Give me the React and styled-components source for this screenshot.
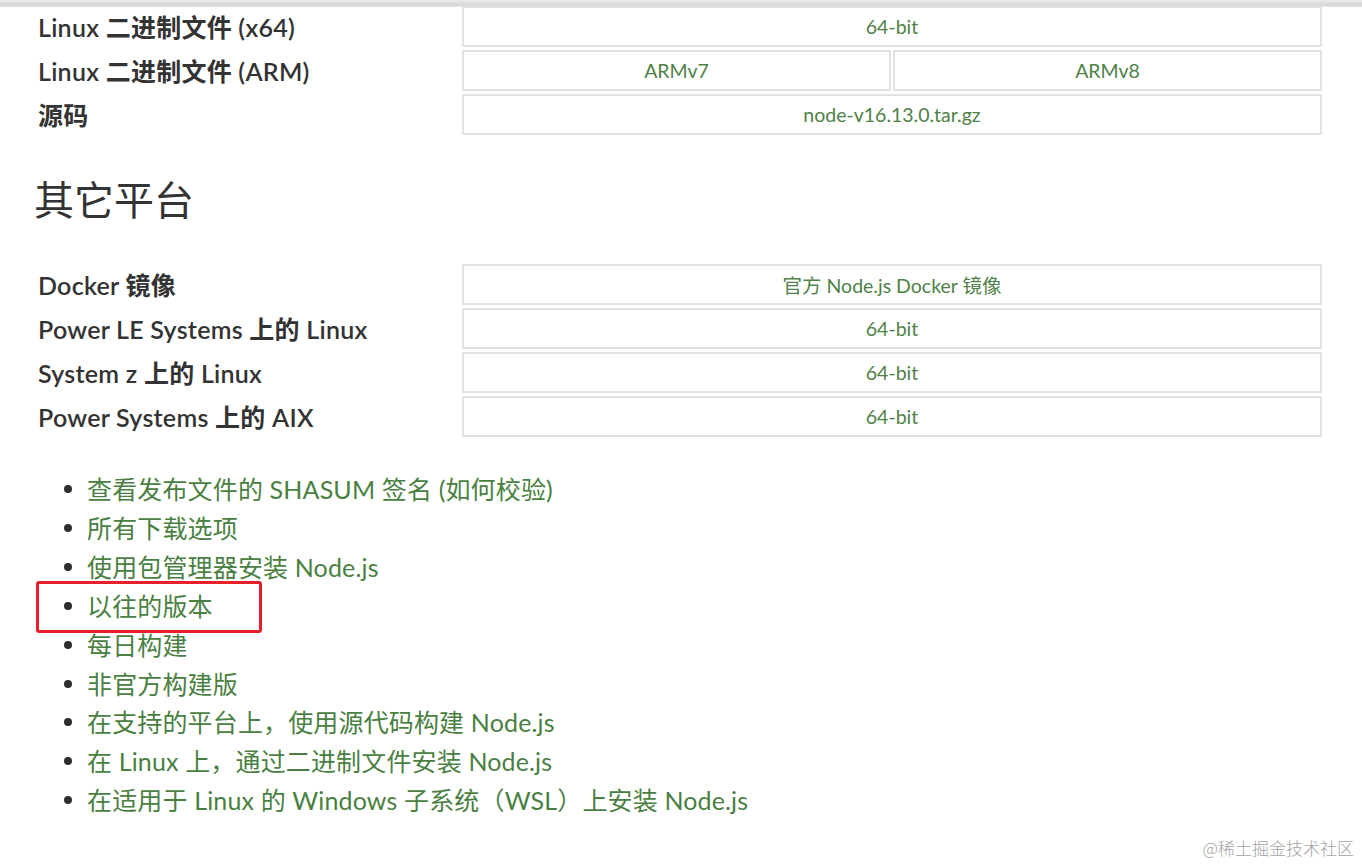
import React from "react";
import styled, { createGlobalStyle } from "styled-components";

const Global = createGlobalStyle`
  html, body { margin: 0; padding: 0; background: #fff; }
  body { font-family: Lato, "Noto Sans CJK SC", sans-serif; color: #333; }
`;

const Page = styled.div`
  position: relative;
  width: 1362px;
  min-height: 866px;
  box-sizing: border-box;
  padding: 6px 40px 0 37px;
  overflow: hidden;
`;

const TopShade = styled.div`
  position: absolute;
  left: 0;
  top: 0;
  right: 0;
  height: 7px;
  background: linear-gradient(#ececec, #d6d6d6 70%, #e4e4e4);
  z-index: 2;
`;

const Table = styled.div`
  display: grid;
  grid-template-columns: 425px 860px;
  row-gap: 3px;
  margin-top: ${(p) => p.$top || 0}px;
`;

const Label = styled.div`
  display: flex;
  align-items: center;
  height: 41px;
  box-sizing: border-box;
  padding: 0 0 2px 1px;
  font-size: 25px;
  font-weight: 600;
  letter-spacing: 0.25px;
  color: #333;
  white-space: nowrap;
`;

const CellGroup = styled.div`
  display: flex;
  gap: 2px;
`;

const Cell = styled.div`
  flex: 1;
  height: 41px;
  box-sizing: border-box;
  border: 2px solid #e2e2e2;
  padding-bottom: 1px;
  display: flex;
  align-items: center;
  justify-content: center;
  font-size: 19.5px;
  color: #4f8148;
  white-space: nowrap;
`;

const Heading = styled.h2`
  margin: 39px 0 0 -3px;
  font-size: 40px;
  line-height: 48px;
  font-weight: 400;
  color: #333;
  font-family: "Noto Sans CJK SC", sans-serif;
`;

const List = styled.ul`
  list-style: none;
  margin: 33px 0 0 0;
  padding: 0 0 0 50px;
`;

const Item = styled.li`
  position: relative;
  font-size: 25px;
  line-height: 38.9px;
  letter-spacing: 0.15px;
  color: #4a7f42;
  white-space: nowrap;

  &::before {
    content: "";
    position: absolute;
    left: -23px;
    top: 15px;
    width: 8px;
    height: 8px;
    border-radius: 50%;
    background: #2e2e2e;
  }
`;

const Highlight = styled.span`
  position: absolute;
  left: -51px;
  top: -6px;
  width: 226px;
  height: 52px;
  box-sizing: border-box;
  border: 3px solid #e5202b;
  border-radius: 3px;
  pointer-events: none;
`;

const Watermark = styled.div`
  position: absolute;
  right: 8px;
  bottom: 6px;
  font-size: 17px;
  color: #a3a3a3;
  font-family: "Noto Sans CJK SC", sans-serif;
  font-weight: 300;
`;

const binaries = [
  { label: "Linux 二进制文件 (x64)", cells: ["64-bit"] },
  { label: "Linux 二进制文件 (ARM)", cells: ["ARMv7", "ARMv8"] },
  { label: "源码", cells: ["node-v16.13.0.tar.gz"] },
];

const others = [
  { label: "Docker 镜像", cells: ["官方 Node.js Docker 镜像"] },
  { label: "Power LE Systems 上的 Linux", cells: ["64-bit"] },
  { label: "System z 上的 Linux", cells: ["64-bit"] },
  { label: "Power Systems 上的 AIX", cells: ["64-bit"] },
];

const links = [
  "查看发布文件的 SHASUM 签名 (如何校验)",
  "所有下载选项",
  "使用包管理器安装 Node.js",
  "以往的版本",
  "每日构建",
  "非官方构建版",
  "在支持的平台上，使用源代码构建 Node.js",
  "在 Linux 上，通过二进制文件安装 Node.js",
  "在适用于 Linux 的 Windows 子系统（WSL）上安装 Node.js",
];

function Rows({ rows, top }) {
  return (
    <Table $top={top}>
      {rows.map((r) => (
        <React.Fragment key={r.label}>
          <Label>{r.label}</Label>
          <CellGroup>
            {r.cells.map((c) => (
              <Cell key={c}>{c}</Cell>
            ))}
          </CellGroup>
        </React.Fragment>
      ))}
    </Table>
  );
}

export default function App() {
  return (
    <>
      <Global />
      <Page>
        <TopShade />
        <Rows rows={binaries} />
        <Heading>其它平台</Heading>
        <Rows rows={others} top={42} />
        <List>
          {links.map((l, i) => (
            <Item key={l}>
              {l}
              {i === 3 && <Highlight />}
            </Item>
          ))}
        </List>
        <Watermark>@稀土掘金技术社区</Watermark>
      </Page>
    </>
  );
}
